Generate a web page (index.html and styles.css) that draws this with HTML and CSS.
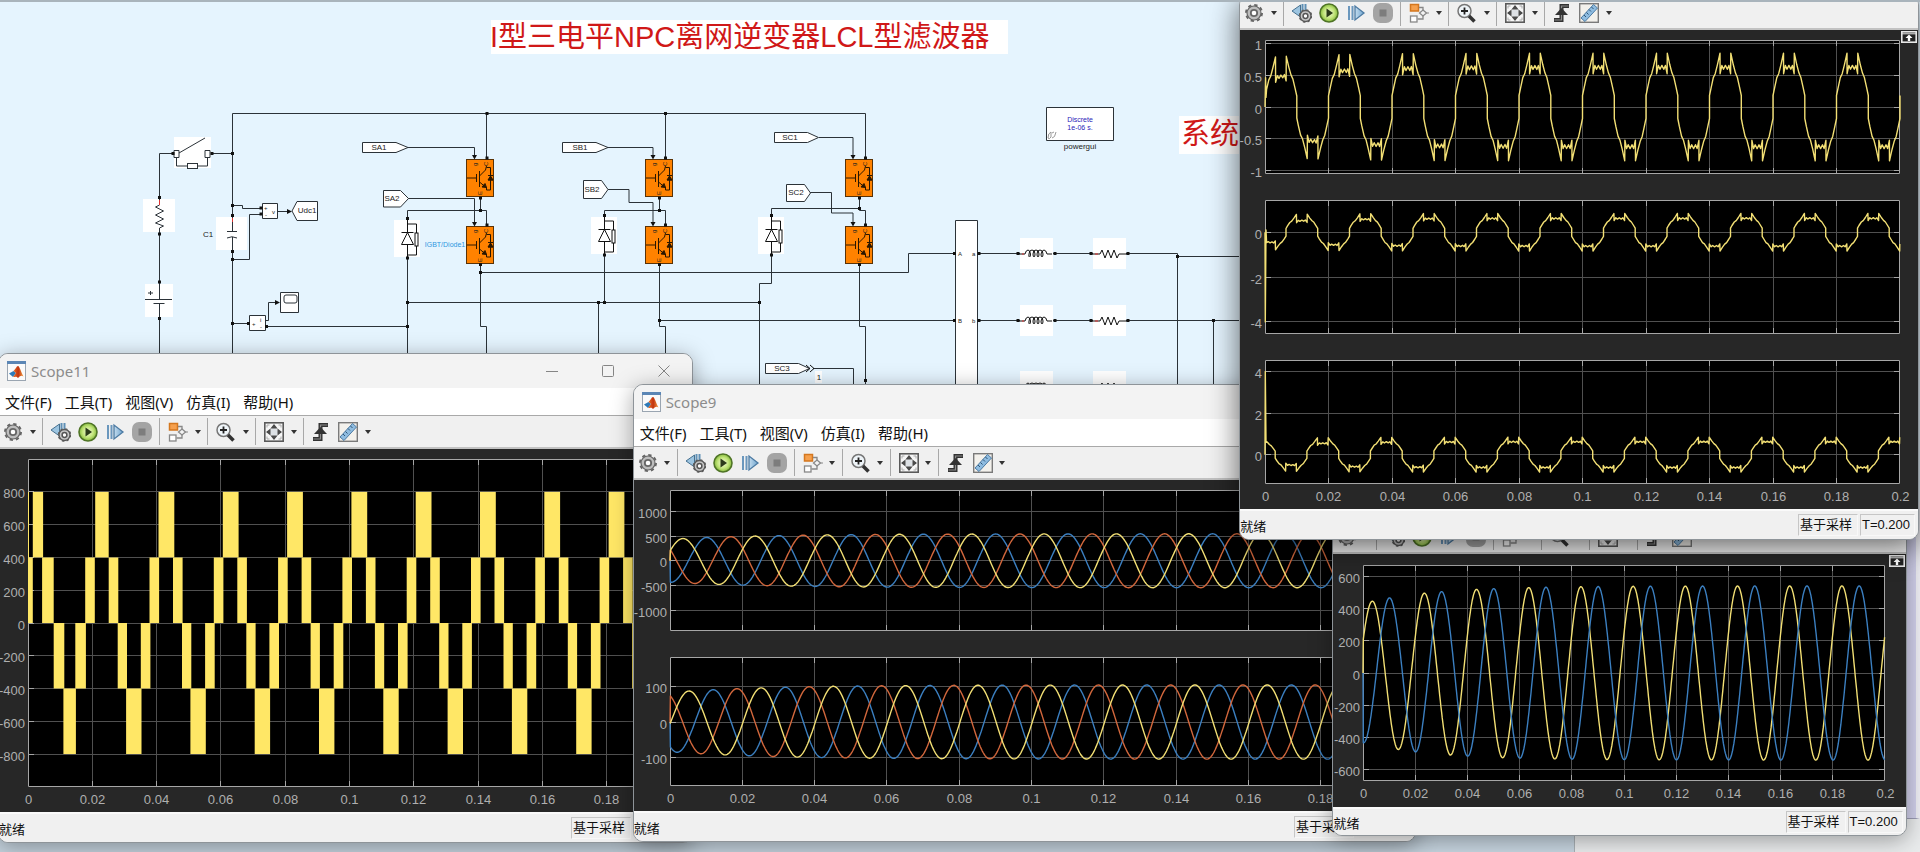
FILE: index.html
```html
<!DOCTYPE html>
<html lang="zh-CN">
<head>
<meta charset="utf-8">
<title>NPC 逆变器仿真</title>
<link rel="stylesheet" href="styles.css">
</head>
<body>
<svg class="defs" aria-hidden="true">
  <defs>
    <radialGradient id="g-green"><stop offset="0" stop-color="#f2fbd8"/><stop offset=".6" stop-color="#c3e57c"/><stop offset="1" stop-color="#86bb3c"/></radialGradient>
    <linearGradient id="g-blue" x1="0" y1="0" x2="1" y2="0"><stop offset="0" stop-color="#c4dcee"/><stop offset="1" stop-color="#6fa5cf"/></linearGradient>
    <linearGradient id="g-logo" x1="0" y1="0" x2="1" y2="0"><stop offset="0" stop-color="#e8742a"/><stop offset=".5" stop-color="#c2330f"/><stop offset="1" stop-color="#f2a043"/></linearGradient>
  </defs>
  <symbol id="i-logo" viewBox="0 0 19 20">
    <rect x=".5" y=".5" width="18" height="19" fill="#fafafa" stroke="#9aa5b1"/>
    <rect x="0" y="0" width="19" height="3" fill="#5b86b5"/>
    <path d="M2 12.500L6.500 10l2.500 2-3 4z" fill="#2e7ab8"/>
    <path d="M6.500 10C8.500 8.500 9.500 5 11 5c1.500 0 3 6 5.500 10.500-2-1.500-3-1-5.500 1.500-1.500-2-3-1-5-1l3-4z" fill="url(#g-logo)"/>
  </symbol>
  <symbol id="i-gear" viewBox="0 0 20 20">
    <g fill="none" stroke="#666">
      <circle cx="10" cy="10" r="8" stroke-width="2" stroke-dasharray="3.300 2.983"/>
      <circle cx="10" cy="10" r="5.400" stroke="#bdbdbd" stroke-width="3.500"/>
      <circle cx="10" cy="10" r="7" stroke-width="1.200"/>
      <circle cx="10" cy="10" r="3.200" stroke-width="1.800" fill="#fff"/>
    </g>
  </symbol>
  <symbol id="i-back" viewBox="0 0 20 20">
    <path d="M0 8L8.500 2v12z" fill="#9cc4e0" stroke="#45708f"/>
    <path d="M10.500 1v8M13.500 1v8" stroke="#5f90b6" stroke-width="2"/>
    <circle cx="13.500" cy="13" r="5.500" fill="#c6c6c6" stroke="#5a5a5a" stroke-width="1.400"/>
    <circle cx="13.500" cy="13" r="6.200" fill="none" stroke="#5a5a5a" stroke-width="1.200" stroke-dasharray="2.400 2.470"/>
    <circle cx="13.500" cy="13" r="2.400" fill="#fff" stroke="#555" stroke-width="1.500"/>
  </symbol>
  <symbol id="i-play" viewBox="0 0 20 20">
    <circle cx="10" cy="10" r="9" fill="url(#g-green)" stroke="#4f7426" stroke-width="1.600"/>
    <path d="M7.500 5.500v9L14 10z" fill="#2c3a1a"/>
  </symbol>
  <symbol id="i-step" viewBox="0 0 20 20">
    <path d="M3 3v14M6.500 3v14" stroke="#6a97bd" stroke-width="2"/>
    <path d="M9 3v14l9-7z" fill="url(#g-blue)" stroke="#4d7ba3" stroke-width="1.300"/>
  </symbol>
  <symbol id="i-stop" viewBox="0 0 20 20">
    <rect x="0" y="0" width="20" height="20" rx="7" fill="#a4a4a4"/>
    <rect x="6.500" y="6.500" width="7" height="7" fill="#7d7d7d"/>
  </symbol>
  <symbol id="i-blocks" viewBox="0 0 20 20">
    <rect x="1.500" y="1.500" width="8" height="6.500" fill="#f6a04d" stroke="#d4771f" stroke-width="1.500"/>
    <path d="M10 4.500h4v3.500M8.500 16h5.500v-4" fill="none" stroke="#888" stroke-width="1.300"/>
    <rect x="1.500" y="13" width="6.500" height="6" fill="#fff" stroke="#888" stroke-width="1.300"/>
    <path d="M14 7l3.500 3-3.500 3-3.500-3z" fill="#f4f4f4" stroke="#888" stroke-width="1.300"/><path d="M17.500 10H20" stroke="#888"/>
  </symbol>
  <symbol id="i-zoom" viewBox="0 0 20 20">
    <circle cx="7.500" cy="8" r="6.500" fill="#eef4f8" stroke="#777" stroke-width="1.500"/>
    <path d="M7.500 4.500v7M4 8h7" stroke="#222" stroke-width="1.800"/>
    <path d="M12 13l5.500 5.500" stroke="#333" stroke-width="3.500"/>
  </symbol>
  <symbol id="i-fit" viewBox="0 0 20 20">
    <rect x=".8" y=".8" width="18.400" height="18.400" fill="#f6f6f6" stroke="#5a5a5a" stroke-width="1.600"/>
    <circle cx="10" cy="10" r="4" fill="#dde1e5"/>
    <path d="M10 2l3.600 4.500H6.400zM10 18l3.600-4.500H6.400zM2 10l4.500-3.600v7.200zM18 10l-4.500-3.600v7.200z" fill="#4a4a4a"/>
    <path d="M3 5.500V3h2.500M14.500 3H17v2.500M17 14.500V17h-2.500M5.500 17H3v-2.500" fill="none" stroke="#aaa"/>
  </symbol>
  <symbol id="i-trigger" viewBox="0 0 20 20">
    <path d="M2 17h7.500V3H17" fill="none" stroke="#333" stroke-width="4"/>
    <path d="M2.500 17h7V3h7" fill="none" stroke="#8a8a8a" stroke-width="1.200"/>
    <path d="M9.500 5L16 12H3z" fill="#333"/>
  </symbol>
  <symbol id="i-ruler" viewBox="0 0 20 20">
    <rect x=".7" y=".7" width="18.600" height="18.600" fill="#f3f1ec" stroke="#7a7a7a" stroke-width="1.400"/>
    <path d="M2 15L14.500 1.500l4 3.500L6 18.500z" fill="#8fbce0" stroke="#4d7ba3"/>
    <path d="M5 12l2 2M7.500 9.500l2 2M10 6.500l2 2M12.500 4l2 2" stroke="#2f5676"/>
  </symbol>
  <symbol id="i-dock" viewBox="0 0 16 12">
    <rect x=".8" y=".8" width="14.400" height="10.400" fill="#222" stroke="#e8e8e8" stroke-width="1.600"/>
    <path d="M1 2.800h14" stroke="#e8e8e8"/>
    <path d="M8 3.500l3.500 3.500h-2.300v3H6.800V7H4.500z" fill="#fff"/>
  </symbol>

  <symbol id="s-igbt" viewBox="0 0 28 38" overflow="visible">
    <rect x=".5" y=".5" width="27" height="37" fill="#ff8200" stroke="#5a3206"/>
    <g fill="none" stroke="#2a1700">
      <path d="M1 19h9M10.500 15v8M13.500 12v16M13.500 17l6-6 1-4M13.500 23l6 5M20.500 8.500h4V31h-4v-3M22 16.500h5M22 21h5"/>
      <path d="M22 21l2.500-4 2.500 4z" fill="#2a1700"/>
      <path d="M20.500 28.500l-4.500-.5 3-3.500z" fill="#2a1700"/>
    </g>
    <g class="pin"><text transform="translate(11 7) rotate(-90)">g</text><text transform="translate(22 7) rotate(-90)">C</text><text transform="translate(16 36) rotate(-90)">E</text></g>
  </symbol>
  <symbol id="s-diode" viewBox="0 0 26 37" overflow="visible">
    <rect width="26" height="37" fill="#fff"/>
    <g fill="#fff" stroke="#111">
      <path d="M13.500 0v37M13.500 4h9v31h-9" fill="none"/>
      <path d="M7.500 24.500l6-12 6 12z"/><path d="M7.500 12.500h12"/>
      <rect x="21" y="13" width="3" height="13"/>
    </g>
  </symbol>
  <symbol id="s-coil" viewBox="0 0 33 31" overflow="visible">
    <rect width="33" height="31" fill="#fff"/>
    <path d="M-1 16h6q1-4 3-4t2.500 4q0 3-1 3t-.5-3q0-4 3-4t3 4q0 3-1 3t-1-3q0-4 3-4t3 4q0 3-1 3t-1-3q0-4 3-4t3 4q0 3-1 3t-1-3q1-4 3-4t3 4h5" fill="none" stroke="#111"/>
    <path d="M2 16h2" stroke="#d33"/>
  </symbol>
  <symbol id="s-res" viewBox="0 0 33 31" overflow="visible">
    <rect width="33" height="31" fill="#fff"/>
    <path d="M-1 16h8l2-4 3 8 3-8 3 8 3-8 3 8 2-4h8" fill="none" stroke="#111"/>
    <path d="M2 16h3" stroke="#d33"/>
  </symbol>
</svg>

<main class="desktop">
  <svg class="schematic" width="1240" height="400" role="img" aria-label="NPC inverter schematic">
    <rect x="491" y="20" width="517" height="34" fill="#fff"/>
    <text class="heading" x="490" y="47">I型三电平NPC离网逆变器LCL型滤波器</text>
    <rect x="1179" y="116" width="70" height="38" fill="#fff"/>
    <text class="heading" x="1181" y="144">系统</text>

    <g class="wire">
      <path d="M159.500 355V153.500H174M210 153.500h22.500M232.500 355V113.500H865.500V160M486.500 113.500V160M665.500 113.500V160"/>
      <path d="M232.500 205.500h10v3h18M232.500 259.500h17v-45h11M277 211.500h12M232.500 323.500h17M265 320.500h3.500v-18h8M265 326.500h142.500"/>
      <path d="M408 147.500h66.500V156M408 198.500h66.500V223M480.500 196v14.500M407.500 218v-7.500h79V226M407.500 256V355M480.500 263V326.500h6V355M480.500 272.500H908.500V253.500H955M407.500 302.500H759.500M598.500 302.500V355"/>
      <path d="M607.500 147.500h45.500V156M607.500 189.500h21.500v13h24V223M659.500 196v14.500M604.500 218v-7.500h61V226M604.500 253v49.500M659.500 263v63.500h6V355M659.500 320.500H955"/>
      <path d="M819 137.500h34V156M810 192.500h21.500v20.500h21.500V223M859.500 196v14.500h6V226M771.500 217v-8.500h88M771.500 253v30.500h-12V386M859.500 263v63.500h6V386M813 368.500h40.500V386"/>
      <path d="M977 253.500h43M1053 253.500h40M1126 253.500h51.500V386M1177.500 256.500H1240M977 320.500h43M1053 320.500h40M1126 320.500h114M1213.500 320.500V386"/>
    </g>
    <g class="block">
      <path d="M362.500 142.500h33.500l12 5-12 5h-33.500zM562.500 142.500h33.500l12 5-12 5h-33.500zM774.500 132.500h33l11 5-11 5h-33zM765.500 363.500h33l11 5-11 5h-33z"/>
      <path d="M383.500 190.500h17l8 8-8 8.500h-17zM583.500 180.500h18l6.500 9-6.500 9h-18zM786.500 184.500h18l6 8.500-6 8.500h-18z"/>
      <path d="M292 211l5-9.500h20.500v19H297zM262.500 203.500h15v15h-15zM249.500 315.500h16v15h-16zM280.500 292.500h18v20h-18zM955.500 220.500h22v180h-22zM1046.500 107.500h67v33h-67z"/>
      <rect x="284" y="295" width="13" height="8" rx="2"/>
    </g>
    <path d="M806 365l4 3.500-4 3.500M810 365l4 3.500-4 3.500" fill="none" stroke="#111"/>
    <rect x="815" y="371" width="7" height="12" fill="#fff"/>

    <g fill="#fff">
      <rect x="174" y="137" width="37" height="31"/><rect x="143" y="199" width="32" height="33"/>
      <rect x="145" y="284" width="28" height="33"/><rect x="216" y="217" width="31" height="33"/>
    </g>
    <g class="wire">
      <path d="M176.500 157v9h31v-9M179 153l26-15M174 150.500h5v7h-5zM205 150.500h5v7h-5z"/>
      <rect x="187.500" y="163.500" width="10" height="5" fill="#fff"/>
      <path d="M159.500 199v6l-4 2 8 4-8 4 8 4-8 4 8 3-4 2v4M159.500 284v15M145 299.500h27M153.500 303.500h11M159.500 303.500V317M148 293h5M150.500 291v4"/>
      <path d="M232.500 217v14M227 231.500h10M227 238q5-2.500 10 0M232.500 237v13"/>
    </g>
    <path d="M159.500 200v5M232.500 218v4" stroke="#d33"/>

    <use href="#s-igbt" x="466" y="159" width="28" height="38"/><use href="#s-igbt" x="466" y="226" width="28" height="38"/>
    <use href="#s-igbt" x="645" y="159" width="28" height="38"/><use href="#s-igbt" x="645" y="226" width="28" height="38"/>
    <use href="#s-igbt" x="845" y="159" width="28" height="38"/><use href="#s-igbt" x="845" y="226" width="28" height="38"/>
    <use href="#s-diode" x="394" y="220" width="26" height="37"/><use href="#s-diode" x="591" y="217" width="26" height="37"/><use href="#s-diode" x="758" y="217" width="26" height="37"/>
    <use href="#s-coil" x="1020" y="238" width="33" height="31"/><use href="#s-coil" x="1020" y="305" width="33" height="31"/><use href="#s-coil" x="1020" y="371" width="33" height="31"/>
    <use href="#s-res" x="1093" y="238" width="33" height="31"/><use href="#s-res" x="1093" y="305" width="33" height="31"/><use href="#s-res" x="1093" y="371" width="33" height="31"/>

    <path class="dots" d="M487 113.500h0M665.500 113.500h0M232.500 153.500h0M232.500 205.500h0M232.500 259.500h0M232.500 323.500h0M480.500 210.500h0M659.500 210.500h0M859.500 208.500h0M480.500 272.500h0M407.500 302.500h0M407.500 326.500h0M598.500 302.500h0M604.500 302.500h0M759.500 302.500h0M659.500 320.500h0M865.500 380.500h0M1177.500 256.500h0M1213.500 320.500h0M173 153.500h0M212 153.500h0M159.500 197.500h0M159.500 234h0M159.500 282h0M159.500 318.500h0M232.500 215.500h0M232.500 251.500h0M261 208h0M261 214h0M248.500 323.500h0M266.500 326.500h0M407.500 218.500h0M407.500 258h0M604.500 215.500h0M604.500 255h0M771.500 215.500h0M771.500 255h0M487 158h0M665.500 158h0M865.500 158h0M487 225h0M665.500 225h0M865.500 225h0M480.500 198h0M659.500 198h0M859.500 198h0M480.500 264.500h0M659.500 264.500h0M859.500 264.500h0M954.500 253.500h0M954.500 320.500h0M979 253.500h0M979 320.500h0M1018 253.500h0M1055 253.500h0M1091 253.500h0M1128 253.500h0M1018 320.500h0M1055 320.500h0M1091 320.500h0M1128 320.500h0"/>
    <path d="M472 155h5l-2.500 4.500zM472 222h5l-2.500 4.500zM650.500 155h5l-2.500 4.500zM650.500 222h5l-2.500 4.500zM850.500 155h5l-2.500 4.500zM850.500 222h5l-2.500 4.500zM287 209v5l5-2.500zM275 300v5l5-2.500z" fill="#111"/>
    <path d="M1048 138q0-5 3-6v5q-2 3-3 1M1052 138q3 0 4-6M1052 133l2-1" stroke="#999" fill="none"/>

    <g class="tag">
      <text x="379" y="150">SA1</text><text x="580" y="150">SB1</text><text x="790" y="140">SC1</text><text x="782" y="371">SC3</text>
      <text x="392" y="201">SA2</text><text x="592" y="192">SB2</text><text x="796" y="195">SC2</text><text x="307" y="213">Udc1</text><text x="208" y="237">C1</text>
      <text x="819" y="380">1</text><text x="1080" y="149">powergui</text>
      <text class="blue" x="1080" y="122">Discrete</text><text class="blue" x="1080" y="130">1e-06 s.</text>
      <text class="sky" x="445" y="247">IGBT/Diode1</text>
    </g>
    <g class="pin">
      <text x="264" y="210">+</text><text x="265" y="217">-</text><text x="272" y="214">v</text><text x="252" y="326">+</text><text x="260" y="322">i</text><text x="260" y="329">-</text>
      <text x="958" y="256">A</text><text x="972" y="256">a</text><text x="958" y="323">B</text><text x="972" y="323">b</text>
    </g>
  </svg>

  <div class="backdrop"><div class="backdrop-panel"></div><div class="backdrop-foot"></div></div>

  <section class="window scope11">
    <header class="titlebar">
      <svg class="logo" width="19" height="20"><use href="#i-logo"/></svg><span>Scope11</span>
      <div class="controls">
        <button aria-label="Minimize"><svg width="12" height="12"><path d="M0 6.500h12"/></svg></button>
        <button aria-label="Maximize"><svg width="12" height="12"><rect x=".5" y=".5" width="11" height="11" rx="1"/></svg></button>
        <button aria-label="Close"><svg width="12" height="12"><path d="M.5.5l11 11M11.500.5l-11 11"/></svg></button>
      </div>
    </header>
    <nav class="menu"><button>文件(F)</button><button>工具(T)</button><button>视图(V)</button><button>仿真(I)</button><button>帮助(H)</button></nav>
    <div class="toolbar"></div>
    <div class="plots"><svg class="plot" data-plot="pwm"></svg></div>
    <footer class="status"><span>就绪</span><span class="cell">基于采样</span></footer>
  </section>

  <section class="window scope9">
    <header class="titlebar"><svg class="logo" width="19" height="20"><use href="#i-logo"/></svg><span>Scope9</span></header>
    <nav class="menu"><button>文件(F)</button><button>工具(T)</button><button>视图(V)</button><button>仿真(I)</button><button>帮助(H)</button></nav>
    <div class="toolbar"></div>
    <div class="plots"><svg class="plot" data-plot="voltage3"></svg><svg class="plot" data-plot="current3"></svg></div>
    <footer class="status"><span>就绪</span><span class="cell">基于采样</span></footer>
  </section>

  <section class="window scope-line">
    <div class="toolbar"></div>
    <div class="plots"><button class="dock" aria-label="Dock"><svg width="16" height="12"><use href="#i-dock"/></svg></button><svg class="plot" data-plot="line"></svg></div>
    <footer class="status"><span>就绪</span><span class="cell">基于采样</span><span class="cell time">T=0.200</span></footer>
  </section>

  <section class="window scope-mod">
    <div class="toolbar"></div>
    <div class="plots"><button class="dock" aria-label="Dock"><svg width="16" height="12"><use href="#i-dock"/></svg></button><svg class="plot" data-plot="modA"></svg><svg class="plot" data-plot="modB"></svg><svg class="plot" data-plot="modC"></svg></div>
    <footer class="status"><span>就绪</span><span class="cell">基于采样</span><span class="cell time">T=0.200</span></footer>
  </section>
</main>

<template id="tools">
  <div class="group first"><button class="tool" aria-label="Settings"><svg><use href="#i-gear"/></svg></button><button class="drop" aria-label="Settings menu"></button></div>
  <div class="group"><button class="tool" aria-label="Step back"><svg><use href="#i-back"/></svg></button><button class="tool" aria-label="Run"><svg><use href="#i-play"/></svg></button><button class="tool" aria-label="Step forward"><svg><use href="#i-step"/></svg></button><button class="tool" aria-label="Stop"><svg><use href="#i-stop"/></svg></button></div>
  <div class="group split"><button class="tool" aria-label="Highlight block"><svg><use href="#i-blocks"/></svg></button><button class="drop" aria-label="Block menu"></button></div>
  <div class="group split"><button class="tool" aria-label="Zoom"><svg><use href="#i-zoom"/></svg></button><button class="drop" aria-label="Zoom menu"></button></div>
  <div class="group split"><button class="tool" aria-label="Fit axes"><svg><use href="#i-fit"/></svg></button><button class="drop" aria-label="Fit menu"></button></div>
  <div class="group last"><button class="tool" aria-label="Triggers"><svg><use href="#i-trigger"/></svg></button><div class="pair"><button class="tool" aria-label="Measurements"><svg><use href="#i-ruler"/></svg></button><button class="drop" aria-label="Measurement menu"></button></div></div>
</template>
<script src="plots.js"></script>
</body>
</html>
```
FILE: styles.css
```css
* { box-sizing: border-box; }
body {
  margin: 0;
  font-family: "Liberation Sans", "Noto Sans CJK SC", sans-serif;
  font-size: 13px;
  color: #111;
}
button { border: 0; padding: 0; margin: 0; background: none; font: inherit; color: inherit; }
.defs { position: absolute; width: 0; height: 0; }

.desktop {
  position: relative;
  min-height: 100vh;
  overflow: hidden;
  background: #e5f4fe;
  border-top: 2px solid #a9b4bc;
}
.schematic { position: absolute; left: 0; top: -2px; }
.heading { font-family: "Liberation Sans", "Noto Sans CJK SC", sans-serif; font-size: 29px; fill: #d01818; }
.wire { fill: none; stroke: #2b3238; }
.block { fill: #fff; stroke: #2b3238; }
.dots { fill: none; stroke: #111; stroke-width: 3; stroke-linecap: square; }
.tag { font-size: 8px; text-anchor: middle; fill: #222; }
.tag .blue { fill: #2a22b8; font-size: 7px; }
.tag .sky { fill: #2f97e0; font-size: 7px; }
.pin { font-size: 6px; fill: #222; }

.backdrop {
  position: absolute;
  left: 0;
  right: 0;
  top: 500px;
  bottom: 0;
  display: grid;
  grid-template: 1fr 33px / 1fr 18%;
  background: #c6d4df;
}
.backdrop-panel { grid-column: 2; background: #d2d1ec; border-right: 4px solid #eeeef4; border-bottom: 1px solid #9c9cb4; }
.backdrop-foot { grid-column: 2; background: #e9ebec; border-left: 1px solid #a9b0b5; }

.window {
  position: absolute;
  display: flex;
  flex-direction: column;
  overflow: hidden;
  background: #f0f0f0;
  border: 1px solid #8e9499;
  border-radius: 10px;
  box-shadow: 0 4px 22px rgba(0, 0, 0, .34);
}
.scope11 { left: -2px; width: 36.2%; top: 351px; }
.scope9 { left: 32.95%; width: 40.8%; top: 382px; }
.scope-line { left: 69.4%; right: .7%; top: 517px; }
.scope-mod { left: 64.55%; right: 1px; top: -7px; box-shadow: 0 6px 30px rgba(0, 0, 0, .6); }

.titlebar {
  display: flex;
  align-items: center;
  gap: 5px;
  height: 34px;
  padding-left: 8px;
  background: #f3f3f3;
  font-family: "Noto Sans", "Noto Sans CJK SC", sans-serif;
  font-size: 15px;
  color: #8c8c8c;
}
.controls { display: flex; margin-left: auto; }
.controls button { width: 56px; height: 34px; }
.controls svg { fill: none; stroke: #858585; }

.menu {
  display: flex;
  gap: 13px;
  height: 27px;
  padding-left: 6px;
  background: #fff;
  font-family: "Noto Sans", "Noto Sans CJK SC", sans-serif;
  font-size: 15px;
  line-height: 26px;
}

.toolbar {
  display: flex;
  align-items: center;
  height: 34px;
  border-top: 1px solid #a9a9a9;
  border-bottom: 2px solid #c2c2c2;
  background: #f0f0f0;
}
.group { display: flex; gap: 7px; height: 27px; align-items: center; padding: 0 7px 0 8px; border-right: 1px solid #a8a8a8; }
.group.first { gap: 0; padding: 0 0 0 4px; }
.group.split { gap: 0; padding-right: 0; }
.group.last { border-right: 0; padding-left: 7px; }
.pair { display: flex; align-items: center; }
.tool { width: 20px; height: 20px; }
.tool svg { display: block; width: 20px; height: 20px; }
.drop { display: flex; justify-content: center; width: 19px; height: 20px; align-items: center; }
.drop::after { content: ""; border: 3px solid transparent; border-top: 4px solid #333; border-bottom: 0; }

.plots {
  position: relative;
  display: flex;
  flex-direction: column;
  gap: 26px;
  background: #272727;
}
.plot { display: block; width: 100%; overflow: visible; }
.scope11 .plots { padding: 10px 21px 25px 29px; }
.scope11 .plot { height: 328px; }
.scope9 .plots { padding: 10px 22px 25px 36px; }
.scope9 .plot { height: 141px; }
.scope9 .plot:last-child { height: 129px; }
.scope-line .plots { padding: 11px 20px 26px 30px; }
.scope-line .plot { height: 216px; }
.scope-mod .plots { padding: 10px 18px 25px 25px; }
.scope-mod .plot { height: 134px; }
.scope-mod .plot:last-child { height: 124px; }
.dock { position: absolute; top: 1px; right: 1px; height: 12px; width: 16px; }
.dock svg { display: block; }

.plot .area { fill: #000; }
.plot .grid { stroke: #505050; fill: none; }
.plot .frame { stroke: #a6a6a6; fill: none; }
.plot text { fill: #afafaf; font-size: 13px; }
.plot .ylab { text-anchor: end; }
.plot .xlab { text-anchor: middle; }
.plot .trace { fill: none; stroke-linejoin: round; stroke-width: 1.4; }
.yellow { stroke: #f2df74; }
.blue-line { stroke: #3b7fc0; }
.orange { stroke: #d2673c; }
.bars { fill: #ffe766; }

.status {
  display: flex;
  align-items: center;
  gap: 2px;
  height: 30px;
  padding-right: 3px;
  border-top: 2px solid #fafafa;
  background: #f0f0f0;
}
.scope11 .status, .scope9 .status { padding-right: 61px; }
.scope-line .status { height: 28px; }
.cell { height: 22px; line-height: 20px; padding: 0 0 0 1px; width: 60px; border: 1px solid #c6c6c6; border-right-color: #f8f8f8; border-bottom-color: #f8f8f8; white-space: nowrap; }
.status .cell:nth-child(2) { margin-left: auto; }
.cell.time { width: 55px; }
```
FILE: plots.js
```js
document.querySelectorAll('.toolbar').forEach(function (bar) {
  bar.appendChild(document.getElementById('tools').content.cloneNode(true));
});

// Sinusoid with an exponential start-up envelope; times are in milliseconds.
function sine(amp, peak, start) {
  var pts = start === undefined ? [] : [[0, start]];
  for (var t = 0.1; t <= 200; t += 0.25) {
    var a = amp * (1 - 0.2 * Math.exp(-t / 27));
    pts.push([t, a * Math.cos(2 * Math.PI * (t - peak) / 20)]);
  }
  return pts;
}

// Half cycle of the modulation signal: fraction, level, 1 when in the notch.
var HALF = [[0, .18, 0], [.05, .3, 0], [.12, .46, 0], [.18, .52, 0], [.25, .66, 0], [.33, .84, 0], [.335, .52, 1], [.39, .65, 1],
  [.44, .59, 1], [.5, .65, 1], [.56, .59, 1], [.61, .65, 1], [.665, .52, 1], [.67, .84, 0], [.75, .66, 0], [.82, .53, 0],
  [.88, .46, 0], [.95, .3, 0], [1, .18, 0]];
function modulation(offset, intro) {
  var pts = intro.slice();
  for (var h = -2; h < 21; h++) {
    HALF.forEach(function (p) {
      var t = offset + (h + p[0]) * 10;
      if (t < 0.4 || t > 200) return;
      var sag = (p[2] ? 0.3 : 0.08) * Math.exp(-t / 20);
      pts.push([t, (h % 2 ? -1 : 1) * p[1] * (1 - sag)]);
    });
  }
  return pts;
}

function pwmBars() {
  var bars = [[0, .3, 0, 800], [0, 1.5, 0, 400], [1.5, 4.7, 400, 800], [4.4, 8, 0, 400], [8, 11.3, -400, 0],
    [11, 14.9, -800, -400], [14.7, 18, -400, 0]];
  for (var k = 1; k < 10; k++) {
    var b = 20 * k;
    bars.push([b - 2.2, b + .8, 0, 400], [b + (k === 1 ? .9 : .6), b + (k === 1 ? 5.1 : 5.5), 400, 800], [b + 5.1, b + 8.1, 0, 400],
      [b + 7.9, b + 10.8, -400, 0], [b + 10.5, b + 15.3, -800, -400], [b + 15.1, b + 18.1, -400, 0]);
  }
  return bars;
}

var PLOTS = {
  pwm: { min: -1001, max: 1001, ticks: [-800, -600, -400, -200, 0, 200, 400, 600, 800], x: true, lastLabel: 9, bars: pwmBars(), traces: [] },
  voltage3: { min: -1420, max: 1430, ticks: [-1000, -500, 0, 500, 1000],
    traces: [['blue-line', sine(545, 10.1, 0)], ['orange', sine(545, 16.8, 0)], ['yellow', sine(545, 3.5, 0)]] },
  current3: { min: -181, max: 184, ticks: [-100, 0, 100], x: true, lastLabel: 9,
    traces: [['blue-line', sine(105, 11.9, 0)], ['orange', sine(105, 18.5, 0)], ['yellow', sine(105, 5.2, 0)]] },
  line: { min: -672, max: 672, ticks: [-600, -400, -200, 0, 200, 400, 600], x: true,
    traces: [['yellow', sine(542, 3.5, 0)], ['blue-line', sine(542, 10.1, 0)]] },
  modA: { min: -1.047, max: 1.047, ticks: [-1, -.5, 0, .5, 1],
    traces: [['yellow', modulation(0, [[0, 0], [.2, .46], [.3, .15]])]] },
  modB: { min: -4.54, max: 1.44, ticks: [-4, -2, 0],
    traces: [['yellow', modulation(6.6, [[0, 0], [.1, -4], [.3, .1]])]] },
  modC: { min: -1.41, max: 4.55, ticks: [0, 2, 4], x: true,
    traces: [['yellow', modulation(13.2, [[0, 0], [.1, 4], [.3, .6]])]] }
};

function draw(svg) {
  var p = PLOTS[svg.dataset.plot];
  var box = svg.getBoundingClientRect(), w = Math.round(box.width), h = Math.round(box.height);
  function X(t) { return t / 200 * w; }
  function Y(v) { return (p.max - v) / (p.max - p.min) * h; }
  function snap(n) { return Math.floor(n) + .5; }
  var grid = '', marks = '', labels = '', out = '';
  for (var i = 0; i <= 10; i++) {
    var x = snap(X(i * 20));
    if (i > 0 && i < 10) {
      grid += 'M' + x + ' 0V' + h;
      marks += 'M' + x + ' 0v6M' + x + ' ' + h + 'v-6';
    }
    if (p.x && i <= (p.lastLabel || 10)) labels += '<text class="xlab" x="' + x + '" y="' + (h + 17) + '">' + (i * .02).toFixed(2).replace(/\.?0+$/, '') + '</text>';
  }
  p.ticks.forEach(function (v) {
    var y = snap(Y(v));
    grid += 'M0 ' + y + 'H' + w;
    marks += 'M0 ' + y + 'h6M' + w + ' ' + y + 'h-6';
    labels += '<text class="ylab" x="-3" y="' + (y + 6) + '">' + v + '</text>';
  });
  out += '<rect class="area" width="' + w + '" height="' + h + '"/><path class="grid" d="' + grid + '"/><path class="frame" d="' + marks + 'M.5.5H' + (w - .5) + 'V' + (h - .5) + 'H.5z"/>';
  (p.bars || []).forEach(function (b) {
    out += '<rect class="bars" x="' + X(b[0]).toFixed(1) + '" y="' + Y(b[3]).toFixed(1) + '" width="' + X(b[1] - b[0]).toFixed(1) + '" height="' + (Y(b[2]) - Y(b[3])).toFixed(1) + '"/>';
  });
  p.traces.forEach(function (tr) {
    out += '<polyline class="trace ' + tr[0] + '" points="' + tr[1].map(function (q) { return X(q[0]).toFixed(1) + ',' + Y(q[1]).toFixed(1); }).join(' ') + '"/>';
  });
  svg.innerHTML = out + labels;
}
function drawAll() { document.querySelectorAll('.plot').forEach(draw); }
drawAll();
window.addEventListener('resize', drawAll);
```
